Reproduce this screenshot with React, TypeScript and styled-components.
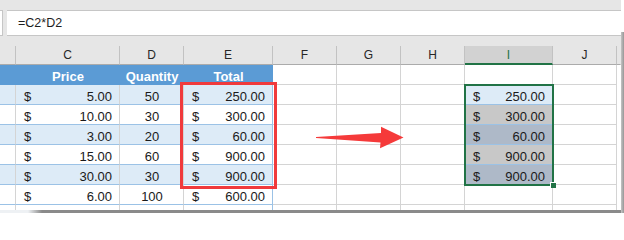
import React from "react";
import styled, { createGlobalStyle } from "styled-components";

const GlobalStyle = createGlobalStyle`
  html, body {
    margin: 0;
    padding: 0;
    background: #ffffff;
  }
`;

const Page = styled.div`
  position: relative;
  width: 624px;
  height: 213px;
  overflow: hidden;
  display: flex;
  background: #ffffff;
  font-family: "Liberation Sans", Arial, sans-serif;
`;

const Main = styled.div`
  width: 621px;
  display: flex;
  flex-direction: column;
`;

const ScrollEdge = styled.div`
  width: 3px;
  margin-top: 32px;
  background: linear-gradient(to right, #c4c4c4, #979797);
`;

const GreyStrip = styled.div`
  height: 10px;
  background: #e6e6e6;
`;

const FormulaRow = styled.div`
  height: 26px;
  display: flex;
  background: #e6e6e6;
`;

const NameBoxEnd = styled.div`
  width: 3px;
  box-sizing: border-box;
  background: #ffffff;
  border: 1px solid #c6c6c6;
  border-left: none;
`;

const FormulaInput = styled.div`
  flex: 1;
  margin-left: 4px;
  box-sizing: border-box;
  background: #ffffff;
  border-top: 1px solid #c6c6c6;
  border-bottom: 1px solid #c6c6c6;
  padding-left: 11px;
  display: flex;
  align-items: center;
  font-size: 12.5px;
  color: #1e1e1e;
`;

const Sheet = styled.div`
  display: grid;
  grid-template-columns: 16px 104px 64px 89px 64px 64px 64px 88px 64px 4px;
  grid-template-rows: 19px repeat(7, 20px) 5px;
`;

const ColHead = styled.div<{ $selected?: boolean; $last?: boolean }>`
  box-sizing: border-box;
  display: flex;
  align-items: center;
  justify-content: center;
  background: ${(p) => (p.$selected ? "#d2d2d2" : "#e6e6e6")};
  border-right: 1px solid ${(p) => (p.$last ? "#e6e6e6" : "#c2c2c2")};
  border-bottom: ${(p) =>
    p.$selected ? "2px solid #217346" : "1px solid #ababab"};
  font-size: 12px;
  color: ${(p) => (p.$selected ? "#217346" : "#262626")};
`;

const Cell = styled.div<{
  $fill?: string;
  $right?: string;
  $bottom?: string;
  $center?: boolean;
}>`
  box-sizing: border-box;
  display: flex;
  align-items: flex-end;
  justify-content: ${(p) => (p.$center ? "center" : "space-between")};
  padding: 0 7px 0 8px;
  background: ${(p) => p.$fill || "#ffffff"};
  border-right: 1px solid ${(p) => p.$right || "#d4d4d4"};
  border-bottom: 1px solid ${(p) => p.$bottom || "#d4d4d4"};
  font-size: 13px;
  line-height: 15px;
  color: #1a1a1a;
  white-space: nowrap;
`;

const HeadCell = styled(Cell)`
  background: #5b9bd5;
  border-right-color: #5b9bd5;
  border-bottom-color: #5b9bd5;
  justify-content: center;
  color: #ffffff;
  font-weight: bold;
`;

const TailCell = styled.div`
  background: #ffffff;
`;

const LastRowCell = styled.div<{ $right?: string }>`
  box-sizing: border-box;
  background: #ffffff;
  border-right: 1px solid ${(p) => p.$right || "#d4d4d4"};
`;

const BottomShadow = styled.div`
  height: 3px;
  background: linear-gradient(
    to right,
    #eef1f4 0,
    #eef1f4 28px,
    #8a8a8a 42px,
    #8a8a8a 100%
  );
`;

const RedFrame = styled.div`
  position: absolute;
  left: 180px;
  top: 82px;
  width: 97px;
  height: 107px;
  box-sizing: border-box;
  border: 3px solid #f03a3c;
`;

const Selection = styled.div`
  position: absolute;
  left: 464px;
  top: 84px;
  width: 90px;
  height: 102px;
  box-sizing: border-box;
  border: 2px solid #217346;
`;

const FillHandle = styled.div`
  position: absolute;
  left: 550px;
  top: 182px;
  width: 6px;
  height: 6px;
  box-sizing: border-box;
  background: #217346;
  border-top: 1px solid #ffffff;
  border-left: 1px solid #ffffff;
`;

const Arrow = styled.svg`
  position: absolute;
  left: 314px;
  top: 125px;
`;

const letters = ["", "C", "D", "E", "F", "G", "H", "I", "J", ""];

const rows = [
  { price: "5.00", qty: "50", total: "250.00" },
  { price: "10.00", qty: "30", total: "300.00" },
  { price: "3.00", qty: "20", total: "60.00" },
  { price: "15.00", qty: "60", total: "900.00" },
  { price: "30.00", qty: "30", total: "900.00" },
  { price: "6.00", qty: "100", total: "600.00" },
];

const copied = ["250.00", "300.00", "60.00", "900.00", "900.00"];
const copiedFill = ["#ddebf7", "#c8c8c8", "#aeb9c8", "#c8c8c8", "#aeb9c8"];

const Money = ({ value }: { value: string }) => (
  <>
    <span>$</span>
    <span>{value}</span>
  </>
);

const App = () => {
  return (
    <Page>
      <GlobalStyle />
      <Main>
        <GreyStrip />
        <FormulaRow>
          <NameBoxEnd />
          <FormulaInput>=C2*D2</FormulaInput>
        </FormulaRow>
        <GreyStrip />
        <Sheet>
          {letters.map((l, i) => (
            <ColHead key={"h" + i} $selected={l === "I"} $last={i === 9}>
              {l}
            </ColHead>
          ))}

          {/* table header row */}
          <HeadCell />
          <HeadCell>Price</HeadCell>
          <HeadCell>Quantity</HeadCell>
          <HeadCell>Total</HeadCell>
          <Cell />
          <Cell />
          <Cell />
          <Cell />
          <Cell />
          <TailCell />

          {rows.map((r, i) => {
            const band = i % 2 === 0 ? "#ddebf7" : "#ffffff";
            const blue = "#9bc2e6";
            return (
              <React.Fragment key={"r" + i}>
                <Cell $fill={band} $bottom={blue} />
                <Cell $fill={band} $bottom={blue}>
                  <Money value={r.price} />
                </Cell>
                <Cell $fill={band} $bottom={blue} $center>
                  {r.qty}
                </Cell>
                <Cell $fill={band} $bottom={blue} $right={blue}>
                  <Money value={r.total} />
                </Cell>
                <Cell />
                <Cell />
                <Cell />
                {i < copied.length ? (
                  <Cell $fill={copiedFill[i]} $bottom={blue}>
                    <Money value={copied[i]} />
                  </Cell>
                ) : (
                  <Cell />
                )}
                <Cell />
                <TailCell />
              </React.Fragment>
            );
          })}

          <LastRowCell />
          <LastRowCell />
          <LastRowCell />
          <LastRowCell $right="#9bc2e6" />
          <LastRowCell />
          <LastRowCell />
          <LastRowCell />
          <LastRowCell />
          <LastRowCell />
          <TailCell />
        </Sheet>
        <BottomShadow />
      </Main>
      <ScrollEdge />

      <RedFrame />
      <Selection />
      <FillHandle />
      <Arrow width="92" height="26" viewBox="0 0 92 26">
        <polygon
          points="2,12 67,8 67,1.8 89.5,12.5 66,23.3 66.5,17.5 2,13"
          fill="#f53a3a"
        />
      </Arrow>
    </Page>
  );
};

export default App;
